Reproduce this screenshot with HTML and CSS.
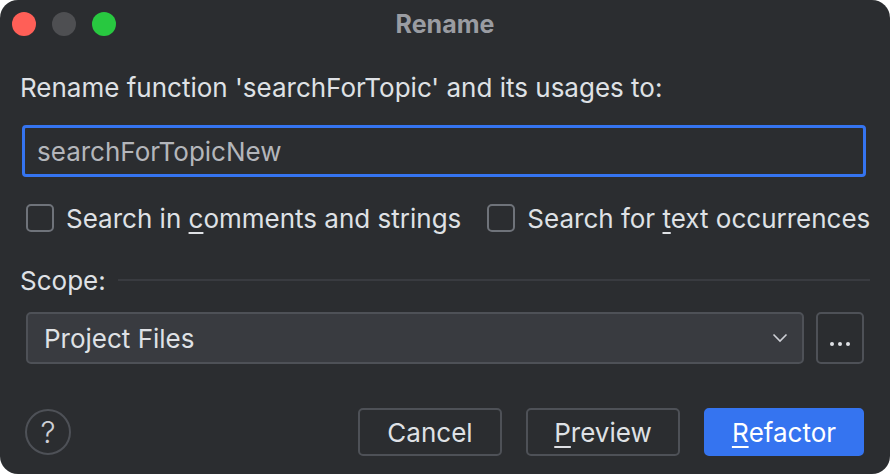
FILE: index.html
```html
<!DOCTYPE html>
<html>
<head>
<meta charset="utf-8">
<link rel="stylesheet" href="styles.css">
</head>
<body>
<div class="window">
  <div class="titlebar">
    <div class="lights">
      <span class="light red"></span>
      <span class="light gray"></span>
      <span class="light green"></span>
    </div>
    <div class="title">Rename</div>
  </div>
  <div class="content">
    <div class="label">Rename function 'searchForTopic' and its usages to:</div>
    <div class="input">searchForTopicNew</div>
    <div class="checks">
      <label class="check"><span class="box"></span><span>Search in <u>c</u>omments and strings</span></label>
      <label class="check"><span class="box"></span><span>Search for <u>t</u>ext occurrences</span></label>
    </div>
    <div class="scope"><span>Scope:</span><span class="sep"></span></div>
    <div class="scoperow">
      <div class="combo">
        <span>Project Files</span>
        <svg class="chev" width="16" height="10" viewBox="0 0 16 10"><path d="M1.5 1.5 L8 8 L14.5 1.5" fill="none" stroke="#ced0d6" stroke-width="1.6"/></svg>
      </div>
      <div class="dots"><span></span><span></span><span></span></div>
    </div>
    <div class="footer">
      <div class="help">?</div>
      <div class="buttons">
        <div class="btn btn-cancel">Cancel</div>
        <div class="btn btn-preview"><u>P</u>review</div>
        <div class="btn btn-refactor primary"><u>R</u>efactor</div>
      </div>
    </div>
  </div>
</div>
</body>
</html>
```

FILE: styles.css
```css
html, body {
  margin: 0;
  padding: 0;
  background: #ffffff;
}
body {
  width: 890px;
  height: 474px;
  overflow: hidden;
  font-family: Inter, "Noto Sans", sans-serif;
}
.window {
  width: 890px;
  height: 474px;
  background: #2b2d30;
  border-radius: 18px;
  color: #dfe1e5;
  box-sizing: border-box;
  display: flex;
  flex-direction: column;
}
.titlebar {
  height: 48px;
  display: flex;
  align-items: center;
  position: relative;
}
.lights {
  display: flex;
  gap: 16px;
  padding-left: 12px;
}
.light {
  width: 24px;
  height: 24px;
  border-radius: 50%;
  display: block;
}
.red { background: #ff5f57; }
.gray { background: #4e4f52; }
.green { background: #28c840; }
.title {
  position: absolute;
  left: 0;
  right: 0;
  top: 0;
  height: 48px;
  line-height: 48px;
  text-align: center;
  font-weight: 700;
  font-size: 25px;
  color: #9a9ca2;
}
.content {
  padding: 0 20px 0 20px;
  display: flex;
  flex-direction: column;
}
.label {
  font-size: 26px;
  margin-top: 24px;
  line-height: 32px;
  height: 32px;
  white-space: nowrap;
}
.input {
  margin-top: 21px;
  margin-left: 2px;
  margin-right: 4px;
  height: 52px;
  box-sizing: border-box;
  border: 3px solid #3574f0;
  border-radius: 4px;
  font-size: 26px;
  color: #b4b6bb;
  padding-left: 12px;
  display: flex;
  align-items: center;
}
.checks {
  display: flex;
  gap: 26px;
  margin-top: 26px;
  margin-left: 6px;
}
.check {
  display: flex;
  align-items: center;
  gap: 12px;
  font-size: 26px;
  height: 30px;
  white-space: nowrap;
  flex: none;
}
.box {
  width: 24px;
  height: 24px;
  border: 2px solid #6f737a;
  border-radius: 5px;
  display: block;
  flex: none;
}
.check u, .btn u {
  text-underline-offset: 4px;
  text-decoration-thickness: 2px;
}
.scope {
  display: flex;
  align-items: center;
  gap: 12px;
  margin-top: 32px;
  font-size: 26px;
  height: 30px;
}
.sep {
  flex: 1;
  height: 2px;
  background: #393b40;
}
.scoperow {
  display: flex;
  gap: 12px;
  margin-top: 17px;
  margin-left: 6px;
  margin-right: 6px;
}
.combo {
  flex: 1;
  height: 52px;
  box-sizing: border-box;
  background: #393b40;
  border: 2px solid #4e5157;
  border-radius: 5px;
  display: flex;
  align-items: center;
  justify-content: space-between;
  padding: 0 14px 0 16px;
  font-size: 26px;
}
.dots {
  width: 48px;
  height: 52px;
  box-sizing: border-box;
  border: 2px solid #4e5157;
  border-radius: 5px;
  display: flex;
  align-items: flex-end;
  justify-content: center;
  gap: 4px;
  padding-bottom: 16px;
}
.dots span {
  width: 4px;
  height: 4px;
  border-radius: 50%;
  background: #dfe1e5;
}
.footer {
  display: flex;
  justify-content: space-between;
  align-items: center;
  margin-top: 44px;
  margin-left: 5px;
  margin-right: 6px;
}
.help {
  width: 46px;
  height: 46px;
  box-sizing: border-box;
  border: 2px solid #4e5157;
  border-radius: 50%;
  display: flex;
  align-items: center;
  justify-content: center;
  font-size: 30px;
  font-weight: 300;
  color: #ced0d6;
}
.buttons {
  display: flex;
  gap: 24px;
}
.btn {
  height: 48px;
  box-sizing: border-box;
  border: 2px solid #4e5157;
  border-radius: 5px;
  display: flex;
  align-items: center;
  justify-content: center;
  font-size: 26px;
  white-space: nowrap;
}
.btn-cancel { width: 144px; }
.btn-preview { width: 154px; }
.btn-refactor { width: 160px; }
.btn.primary {
  background: #3574f0;
  border-color: #3574f0;
  color: #ffffff;
}
```
